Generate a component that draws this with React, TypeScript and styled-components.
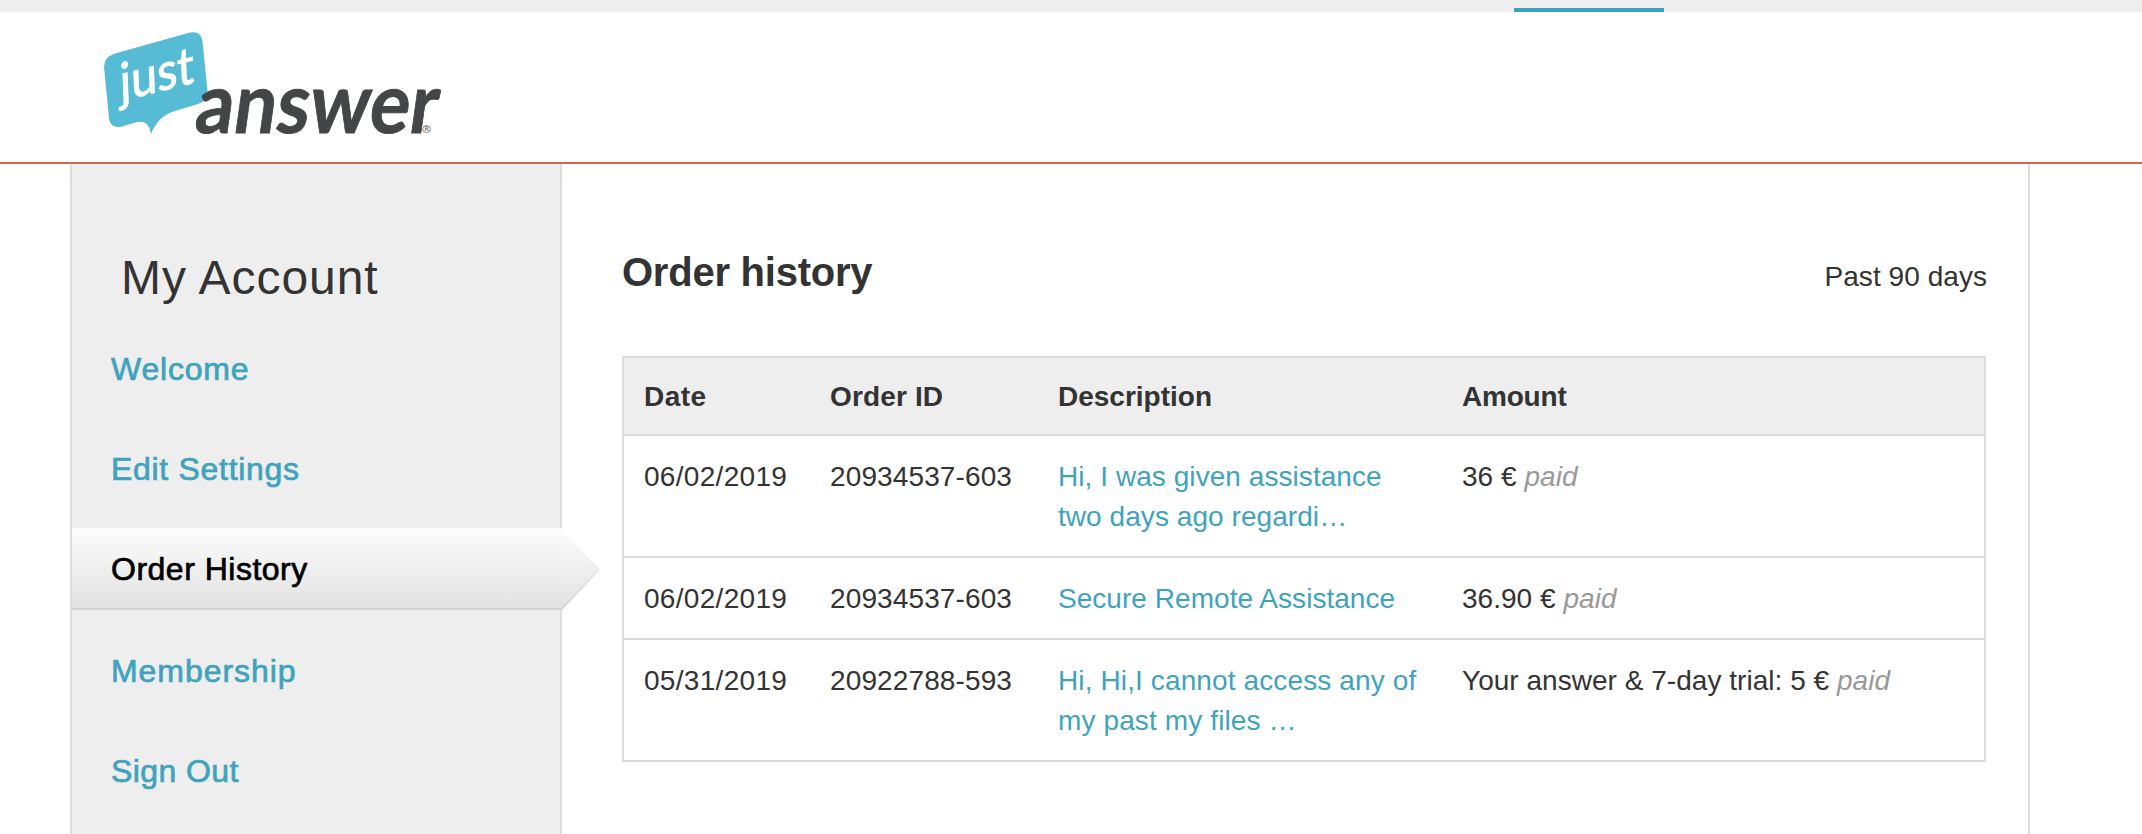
import React from "react";
import styled, { createGlobalStyle, css } from "styled-components";

const teal = "#3fa3bd";
const line = "#dcdcdc";
const panel = "#eeeeee";

const Global = createGlobalStyle`
  * { box-sizing: border-box; }
  body {
    margin: 0;
    background: #fff;
    color: #333;
    font-family: "Liberation Sans", Arial, sans-serif;
    font-size: 28px;
    line-height: 40px;
  }
`;

const Page = styled.div`
  display: flex;
  flex-direction: column;
  height: 834px;
  overflow: hidden;
`;

const TopBar = styled.div`
  display: flex;
  align-items: flex-end;
  flex: none;
  height: 12px;
  padding-left: 1514px;
  background: ${panel};
`;

const ActiveTab = styled.div`
  width: 150px;
  height: 4px;
  background: #3aa2be;
`;

const Header = styled.header`
  flex: none;
  height: 152px;
  padding: 20px 0 0 104px;
  border-bottom: 2px solid #d4644d;
`;

const LogoSvg = styled.svg`
  display: block;
  overflow: visible;
`;

const Main = styled.div`
  display: flex;
  flex: 1;
  width: 1960px;
  margin-left: 70px;
  border-right: 2px solid ${line};
`;

const Sidebar = styled.aside`
  flex: none;
  width: 492px;
  padding-top: 84px;
  background: ${panel};
  border: solid ${line};
  border-width: 0 2px;
`;

const SidebarTitle = styled.h1`
  margin: 0 0 20px 49px;
  font-size: 48px;
  line-height: 60px;
  font-weight: 400;
  letter-spacing: 0.95px;
`;

const Nav = styled.nav`
  display: flex;
  flex-direction: column;
  gap: 20px;
`;

const NavItem = styled.a<{ $active?: boolean; $tracking: number }>`
  position: relative;
  height: 80px;
  padding-left: 39px;
  color: ${teal};
  font-size: 32px;
  line-height: 82px;
  letter-spacing: ${(p) => p.$tracking}px;
  -webkit-text-stroke: 0.7px currentColor;
  ${(p) =>
    p.$active &&
    css`
      height: 82px;
      margin-right: -2px;
      color: #000;
      background: linear-gradient(#fcfcfc, #e2e2e2);
      border-bottom: 2px solid #d3d3d3;
    `}
`;

const Arrow = styled.svg`
  position: absolute;
  left: 100%;
  top: 0;
`;

const Content = styled.main`
  flex: 1;
  padding: 84px 42px 0 60px;
`;

const TitleRow = styled.div`
  display: flex;
  align-items: baseline;
  justify-content: space-between;
  height: 48px;
  margin-bottom: 60px;
`;

const Title = styled.h2`
  margin: 0;
  font-size: 40px;
  line-height: 48px;
  letter-spacing: -0.24px;
`;

const Period = styled.span`
  margin-right: -1px;
  letter-spacing: 0.05px;
`;

const Table = styled.div`
  border: solid ${line};
  border-width: 2px 2px 0;
`;

const Row = styled.div<{ $head?: boolean }>`
  display: grid;
  grid-template-columns: 186px 228px 404px 1fr;
  padding: 21px 0 19px 20px;
  border-bottom: 2px solid ${line};
  ${(p) =>
    p.$head &&
    css`
      padding-top: 19px;
      padding-bottom: 17px;
      background: ${panel};
      font-weight: 700;
    `}
`;

const Cell = styled.div<{ $tracking?: number }>`
  white-space: pre-line;
  letter-spacing: ${(p) => p.$tracking ?? 0}px;
`;

const Description = styled(Cell)`
  color: ${teal};
`;

const Paid = styled.em`
  color: #999;
`;

const nav = [
  { label: "Welcome", tracking: 0.8 },
  { label: "Edit Settings", tracking: 0.7 },
  { label: "Order History", tracking: 0.5, active: true },
  { label: "Membership", tracking: 0.95 },
  { label: "Sign Out", tracking: 0.42 },
];

const orders = [
  { date: "06/02/2019", id: "20934537-603", text: "Hi, I was given assistance\ntwo days ago regardi…", tracking: 0.06, amount: "36 €" },
  { date: "06/02/2019", id: "20934537-603", text: "Secure Remote Assistance", tracking: 0.04, amount: "36.90 €" },
  { date: "05/31/2019", id: "20922788-593", text: "Hi, Hi,I cannot access any of\nmy past my files …", tracking: 0.12, amount: "Your answer & 7-day trial: 5 €" },
];

const Logo = () => (
  <LogoSvg width="338" height="102" viewBox="0 0 338 102" role="img" aria-label="JustAnswer">
    <path
      fill="#56bcd6"
      d="M11 21.500 86 .5Q97-1.500 98.500 9L103.500 59Q104 69 94 72L71 79Q54 84 47 102Q46 94 41 91Q38 89 33 90L16 95Q6 96 5 86L0 35Q0 25 11 21.500Z"
    />
    <text
      transform="matrix(1 -0.25 0.04 1 16.500 69)"
      textLength="74"
      lengthAdjust="spacingAndGlyphs"
      fill="#fff"
      fontFamily="Lato, sans-serif"
      fontSize="52"
      fontWeight="400"
      stroke="#fff"
      strokeWidth="1"
    >
      just
    </text>
    <text
      transform="translate(89 101) skewX(-8)"
      textLength="242"
      lengthAdjust="spacingAndGlyphs"
      fill="#444547"
      fontFamily="Lato, sans-serif"
      fontSize="84"
      fontWeight="700"
      stroke="#444547"
      strokeWidth="0.8"
    >
      answer
    </text>
    <text x="318" y="101" fill="#66676a" fontFamily="Open Sans, sans-serif" fontSize="11" fontWeight="600">
      ®
    </text>
  </LogoSvg>
);

export default function App() {
  return (
    <Page>
      <Global />
      <TopBar>
        <ActiveTab />
      </TopBar>
      <Header>
        <Logo />
      </Header>
      <Main>
        <Sidebar>
          <SidebarTitle>My Account</SidebarTitle>
          <Nav>
            {nav.map((item) => (
              <NavItem key={item.label} $active={item.active} $tracking={item.tracking}>
                {item.label}
                {item.active && (
                  <Arrow width="39" height="83" viewBox="0 0 39 83">
                    <defs>
                      <linearGradient id="arrowFill" x1="0" y1="0" x2="0" y2="1">
                        <stop offset="0" stopColor="#fcfcfc" />
                        <stop offset="1" stopColor="#e2e2e2" />
                      </linearGradient>
                      <linearGradient id="arrowEdge" x1="0" y1="0" x2="0" y2="1">
                        <stop offset="0" stopColor="#fcfcfc" />
                        <stop offset="0.5" stopColor="#e8e8e8" />
                        <stop offset="1" stopColor="#d3d3d3" />
                      </linearGradient>
                    </defs>
                    <path d="M0 3 38 42 0 82Z" fill="url(#arrowEdge)" />
                    <path d="M0 3 36 41.500 0 79Z" fill="url(#arrowFill)" />
                  </Arrow>
                )}
              </NavItem>
            ))}
          </Nav>
        </Sidebar>
        <Content>
          <TitleRow>
            <Title>Order history</Title>
            <Period>Past 90 days</Period>
          </TitleRow>
          <Table>
            <Row $head>
              <Cell $tracking={0.5}>Date</Cell>
              <Cell $tracking={0.15}>Order ID</Cell>
              <Cell>Description</Cell>
              <Cell $tracking={-0.2}>Amount</Cell>
            </Row>
            {orders.map((order, i) => (
              <Row key={i}>
                <Cell $tracking={0.3}>{order.date}</Cell>
                <Cell $tracking={0.12}>{order.id}</Cell>
                <Description $tracking={order.tracking}>{order.text}</Description>
                <Cell $tracking={0.03}>
                  {order.amount} <Paid>paid</Paid>
                </Cell>
              </Row>
            ))}
          </Table>
        </Content>
      </Main>
    </Page>
  );
}
